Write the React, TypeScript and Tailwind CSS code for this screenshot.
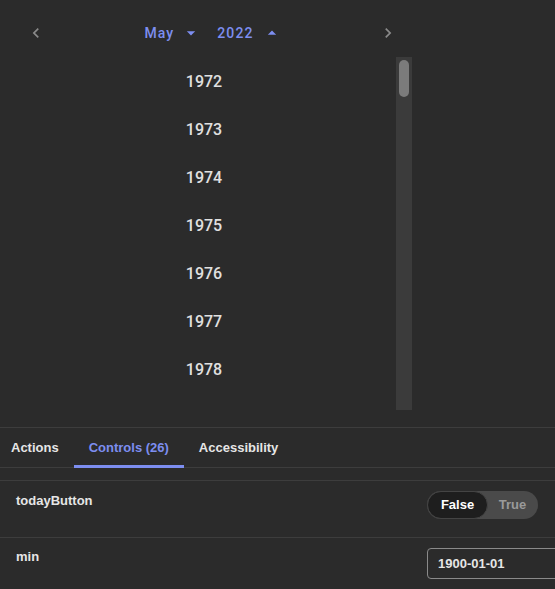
import React from "react";

const years = [1972, 1973, 1974, 1975, 1976, 1977, 1978];

function ChevronLeft() {
  return (
    <svg width="20" height="20" viewBox="0 0 24 24" fill="#8a8a8a">
      <path d="M15.41 7.41 14 6l-6 6 6 6 1.41-1.41L10.83 12z" />
    </svg>
  );
}
function ChevronRight() {
  return (
    <svg width="20" height="20" viewBox="0 0 24 24" fill="#8a8a8a">
      <path d="M10 6 8.59 7.41 13.17 12l-4.58 4.59L10 18l6-6z" />
    </svg>
  );
}
function DropDown({ up }: { up?: boolean }) {
  return (
    <svg width="20" height="20" viewBox="0 0 24 24" fill="#7d8ef0">
      {up ? <path d="m7 14 5-5 5 5z" /> : <path d="M7 10l5 5 5-5z" />}
    </svg>
  );
}

export default function App() {
  return (
    <div className="w-full h-[589px] overflow-hidden bg-[#2b2b2b]">
      {/* Calendar */}
      <div className="h-[427px] w-[424px] pt-[13px]" style={{ fontFamily: "Roboto, 'Liberation Sans', sans-serif" }}>
        <div className="flex items-center h-[40px] px-4">
          <div className="w-10 h-10 flex items-center justify-center">
            <ChevronLeft />
          </div>
          <div className="flex-1 flex items-center justify-center pl-[2px]">
            <span className="text-[14px] font-medium tracking-[1.1px] text-[#7d8ef0]">May</span>
            <span className="ml-[7px] flex"><DropDown /></span>
            <span className="ml-[16px] text-[14px] font-medium tracking-[1.1px] text-[#7d8ef0]">2022</span>
            <span className="ml-[8px] flex"><DropDown up /></span>
          </div>
          <div className="w-10 h-10 flex items-center justify-center">
            <ChevronRight />
          </div>
        </div>
        <div className="flex mt-[4px] h-[353px] w-[412px]">
          <div className="flex-1 overflow-hidden pl-[12px] pt-[1px]">
            {years.map((y) => (
              <div key={y} className="h-[48px] flex items-center justify-center text-[16px] font-medium text-[#e0e0e0]">
                {y}
              </div>
            ))}
          </div>
          <div className="w-[16px] h-full bg-[#3b3b3b] pt-[3px] flex justify-center">
            <div className="w-[10px] h-[37px] rounded-full bg-[#7b7b7b]" />
          </div>
        </div>
      </div>

      {/* Addon panel */}
      <div style={{ fontFamily: "'Liberation Sans', Arial, sans-serif" }}>
        <div className="h-[41px] border-t border-b border-[#3d3d3d] flex text-[13px] font-bold">
          <div className="pl-[11px] pr-[15px] flex items-center text-[#e6e6e6]">Actions</div>
          <div className="relative px-[15px] flex items-center text-[#7d8ef0]">
            Controls (26)
            <div className="absolute left-0 right-0 bottom-[-1px] h-[3px] bg-[#7d8ef0]" />
          </div>
          <div className="px-[15px] flex items-center text-[#e6e6e6]">Accessibility</div>
        </div>
        <div className="mt-[12px] border-t border-[#3d3d3d]">
          <div className="h-[57px] border-b border-[#3d3d3d] flex">
            <div className="w-[427px] shrink-0 pl-4 pt-[10px] text-[13px] leading-[20px] font-bold text-[#e6e6e6]">todayButton</div>
            <div className="pt-[10px] shrink-0">
              <div className="flex h-[28px] w-[111px] rounded-full bg-[#4a4a4a] text-[13px] font-bold">
                <div className="w-[61px] h-full rounded-full bg-[#1e1e1e] border border-[#444444] flex items-center justify-center text-white">
                  False
                </div>
                <div className="flex-1 flex items-center justify-center text-[#9a9a9a] pr-[1px]">True</div>
              </div>
            </div>
          </div>
          <div className="flex">
            <div className="w-[427px] shrink-0 pl-4 pt-[9px] text-[13px] leading-[20px] font-bold text-[#e6e6e6]">min</div>
            <div className="pt-[10px] shrink-0">
              <div className="w-[200px] h-[31px] rounded-[4px] border border-[#8a8a8a] flex items-center pl-[10px] text-[13px] font-bold text-[#e6e6e6]">
                1900-01-01
              </div>
            </div>
          </div>
        </div>
      </div>
    </div>
  );
}
